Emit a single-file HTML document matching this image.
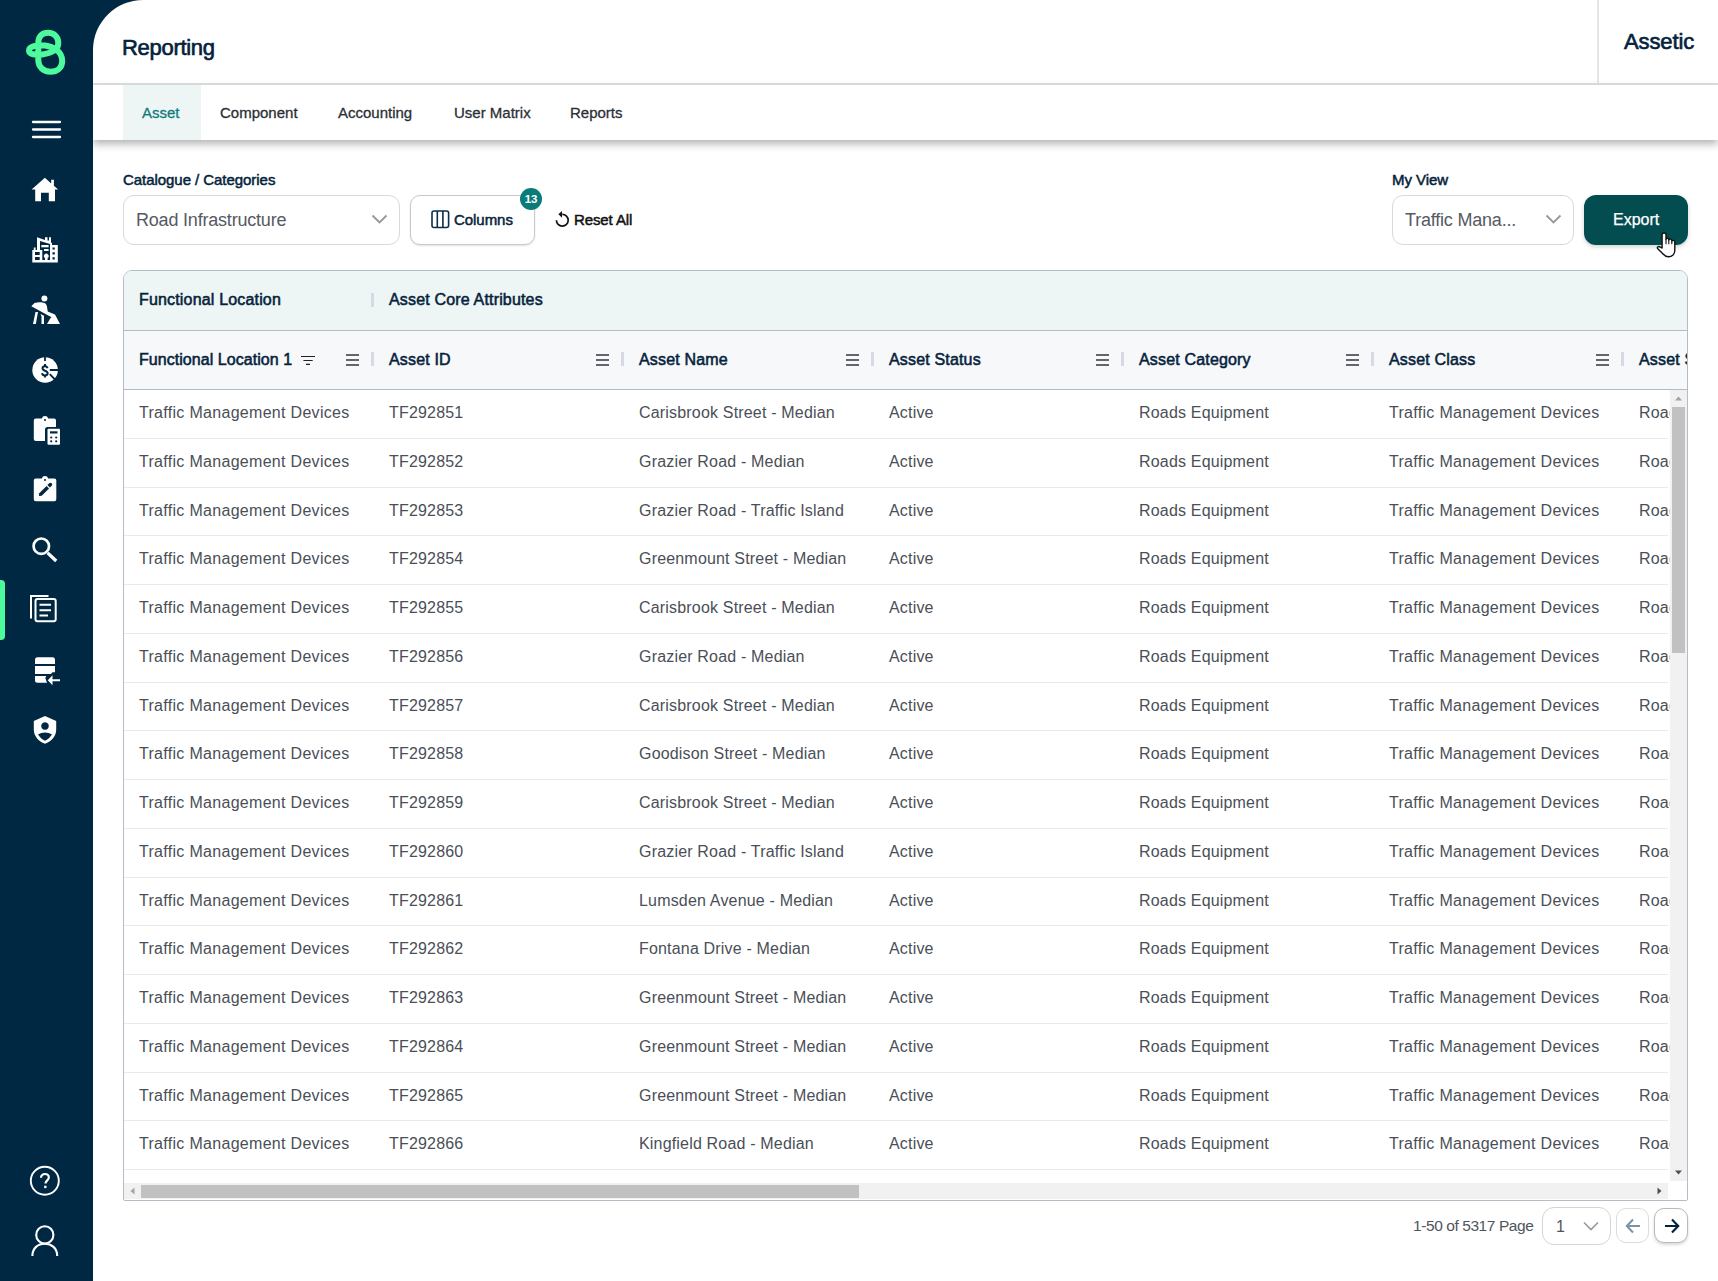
<!DOCTYPE html>
<html><head><meta charset="utf-8"><title>Reporting</title>
<style>
*{box-sizing:border-box;margin:0;padding:0}
html,body{width:1718px;height:1281px;overflow:hidden;background:#002843;font-family:"Liberation Sans",sans-serif;}
.a{position:absolute}
#side{position:absolute;left:0;top:0;width:93px;height:1281px;background:#002843}
#main{position:absolute;left:93px;top:0;width:1625px;height:1281px;background:#fff;border-top-left-radius:50px;overflow:hidden}
#hdr{position:absolute;left:0;top:0;width:1625px;height:85px;border-bottom:2px solid #e1e1e1}
#title{position:absolute;left:29px;top:35px;font-size:22px;font-weight:normal;color:#03223b;letter-spacing:-0.3px;line-height:26px;white-space:nowrap;-webkit-text-stroke:0.65px currentColor}
#brand{position:absolute;left:1504px;top:0;width:121px;height:83px;border-left:2px solid #e6e6e6}
#brand span{position:absolute;left:25px;top:29px;font-size:22px;font-weight:normal;color:#03223b;letter-spacing:-0.1px;line-height:26px;-webkit-text-stroke:0.65px currentColor}
#tabs{position:absolute;left:0;top:85px;width:1625px;height:55px;background:#fff;box-shadow:0 4px 8px rgba(0,0,0,0.30)}
.tab{position:absolute;top:0;height:55px;font-size:15px;color:#2b2f36;line-height:55px;white-space:nowrap;-webkit-text-stroke:0.3px currentColor}
.tab.act{background:#eef6f5;color:#0e7c7b}
.lbl{position:absolute;font-size:15px;font-weight:normal;color:#03223b;letter-spacing:-0.05px;line-height:18px;white-space:nowrap;-webkit-text-stroke:0.5px currentColor}
.sel{position:absolute;border:1px solid #d9d9d9;border-radius:11px;background:#fff;height:50px}
.sel .t{position:absolute;left:12px;top:14px;font-size:18px;color:#555a63;line-height:20px;white-space:nowrap;letter-spacing:-0.2px}
#tbl{position:absolute;left:30px;top:270px;width:1565px;height:931px;border:1px solid #b4bcc8;border-radius:9px 9px 2px 2px;overflow:hidden;background:#fff}
#grp{position:absolute;left:0;top:0;width:1565px;height:60px;background:#eef6f5;border-bottom:1px solid #b4bcc8}
#colh{position:absolute;left:0;top:60px;width:1565px;height:59px;background:#f7f8fa;border-bottom:1px solid #b4bcc8}
.hd{position:absolute;font-size:16px;font-weight:normal;color:#06233d;letter-spacing:0.17px;line-height:20px;white-space:nowrap;-webkit-text-stroke:0.55px currentColor}
.sep{position:absolute;width:3px;height:14px;background:#d6dae6}
.menu{position:absolute;width:13px;height:12px;border-top:2px solid #63676c;border-bottom:2px solid #63676c}
.menu:after{content:"";position:absolute;left:0;top:3px;width:13px;height:2px;background:#63676c}
.rl{position:absolute;left:0;width:1544px;height:1px;background:#e6e9ee}
.c{position:absolute;font-size:16px;color:#4a4f57;letter-spacing:0.3px;line-height:20px;white-space:nowrap}
</style></head><body>
<div id="side">
<svg class="a" style="left:15px;top:20px" width="60" height="60" viewBox="0 0 60 60" fill="none" stroke="#4dfb9c" stroke-width="6">
<path d="M23.3 40 L23.3 23 C23.3 16 27.5 12.8 33.2 12.8 C39 12.8 43.3 17 43.3 23 C43.3 29.5 37 33 27 34.5 C19 35.5 14 34 14 30.5 C14 26.5 22 24.5 30 25.5 C38 26.5 47.2 31 47.2 41 C47.2 48 42 51.8 35.5 51.8 C28.5 51.8 23.3 47 23.3 40 Z"/>
</svg>
<svg class="a" style="left:25px;top:110px" width="40" height="40" viewBox="0 0 40 40" stroke="#fff" stroke-width="2.3" stroke-linecap="round">
<path d="M8 12H35M8 19.5H35M8 27H35"/></svg>
<svg class="a" style="left:25px;top:170px" width="40" height="40" viewBox="0 0 40 40" fill="#fff">
<path d="M19.9 7.8 L6.6 19.6 H10.2 V31.3 H16 V22.7 H23.8 V31.3 H30 V19.6 H33.2 L28.9 15.8 V9.8 H26.2 V13.4 Z"/></svg>
<svg class="a" style="left:25px;top:230px" width="40" height="40" viewBox="0 0 40 40" fill="#fff" fill-rule="evenodd">
<path d="M7.3 20 H8.8 V17.5 H10.6 V20 H12 V7.3 L20 10 V7.3 H22.5 V10.5 H24 V7.3 H26 V12.5 L27 13 V15 H32.8 V32.5 H7.3 Z
M10 22 V25 H14.7 V22 Z M10 27 V30 H14.7 V27 Z
M15 11 V20 H17.3 V30 H20 V28 A2.3 2.3 0 1 1 22.6 28 V30 H25 V14 Z
M27.5 17.5 V19.5 H29.8 V17.5 Z M27.5 22.3 V24.5 H29.8 V22.3 Z M27.5 27.3 V29.5 H29.8 V27.3 Z"/>
<rect x="16.3" y="15" width="7.3" height="2.3"/><rect x="19" y="19" width="4.6" height="2"/></svg>
<svg class="a" style="left:25px;top:290px" width="40" height="40" viewBox="0 0 40 40" fill="#fff">
<circle cx="19.4" cy="8.5" r="3"/>
<path d="M6.3 16.2 L9.5 13 C13 12 17 11.8 20.5 13.5 C21.8 14.8 22.3 17.5 22.7 21.5 L30 24.5 L35 34 H22 L25.2 28.5 L26.5 27.3 Z"/>
<path d="M10.5 22 H13 L10.8 34 H8 Z"/>
<path d="M15.5 24 L19 25.8 V34 H16.5 V26.5 Z"/>
</svg>
<svg class="a" style="left:25px;top:350px" width="40" height="40" viewBox="0 0 40 40">
<circle cx="20.1" cy="20" r="12.8" fill="#fff"/>
<path d="M20 6 V11 M24.8 20 H34 M24.8 24.2 L30 29.5" stroke="#002843" stroke-width="1.8"/>
<path d="M22.5 18.3 C22.2 16.8 21.2 16.2 20 16.2 C18.5 16.2 17.5 17 17.5 18.3 C17.5 19.8 18.8 20.3 20 20.7 C21.5 21.2 22.7 21.8 22.7 23.3 C22.7 24.6 21.6 25.4 20 25.4 C18.4 25.4 17.3 24.6 17 23.2 M20 14 V16.2 M20 25.4 V27.6" fill="none" stroke="#002843" stroke-width="2"/>
</svg>
<svg class="a" style="left:25px;top:410px" width="40" height="40" viewBox="0 0 40 40">
<path d="M10.8 8.5 H16.8 A3.3 3.3 0 0 1 23.2 8.5 H29 A2 2 0 0 1 31 10.5 V17 H22.5 A2.5 2.5 0 0 0 20 19.5 V31 H10.8 A2 2 0 0 1 8.8 29 V10.5 A2 2 0 0 1 10.8 8.5 Z" fill="#fff"/>
<circle cx="20" cy="10" r="1" fill="#002843"/>
<rect x="22.5" y="18.7" width="12.5" height="16.1" rx="1" fill="#fff"/>
<rect x="25" y="21.3" width="7.5" height="2.2" fill="#002843"/>
<circle cx="26.2" cy="27.5" r="1.1" fill="#002843"/><circle cx="31.2" cy="27.5" r="1.1" fill="#002843"/>
<circle cx="26.2" cy="31.3" r="1.1" fill="#002843"/><circle cx="31.2" cy="31.3" r="1.1" fill="#002843"/>
</svg>
<svg class="a" style="left:25px;top:469px" width="40" height="40" viewBox="0 0 40 40">
<path d="M10.8 9.5 H16.8 A3.3 3.3 0 0 1 23.2 9.5 H29.3 A2 2 0 0 1 31.3 11.5 V30.3 A2 2 0 0 1 29.3 32.3 H10.8 A2 2 0 0 1 8.8 30.3 V11.5 A2 2 0 0 1 10.8 9.5 Z" fill="#fff"/>
<circle cx="20" cy="11" r="1" fill="#002843"/>
<path d="M13.9 27.1 L14.26 24.26 L21.56 16.96 L24.04 19.44 L16.74 26.74 Z" fill="#002843"/>
<path d="M22.4 16.1 L24.2 14.3 Q25.5 13.1 26.7 14.3 Q27.9 15.5 26.7 16.8 L24.9 18.6 Z" fill="#002843"/>
</svg>
<svg class="a" style="left:25px;top:529px" width="40" height="40" viewBox="0 0 40 40" fill="none" stroke="#fff">
<circle cx="16.3" cy="17.2" r="7.7" stroke-width="2.7"/>
<path d="M22.6 23.9 L31.2 32" stroke-width="3.3"/>
</svg>
<svg class="a" style="left:25px;top:580px" width="40" height="65" viewBox="0 0 40 65" fill="none" stroke="#fff" stroke-width="2">
<path d="M6 38.5 V16 H23.5"/>
<rect x="10.5" y="19" width="20.2" height="22.3" rx="2"/>
<path d="M14.5 24.8 H26 M14.5 30.2 H26 M14.5 35.5 H23"/>
</svg>
<svg class="a" style="left:25px;top:650px" width="40" height="40" viewBox="0 0 40 40" fill="#fff">
<path d="M10 14 V9.7 A2.5 2.5 0 0 1 12.5 7.2 H27.5 A2.5 2.5 0 0 1 30 9.7 V14 Z"/>
<path d="M10 16 H30 V22.3 H27.5 L26 24 H10 Z"/>
<path d="M10 26 H21.3 L20.3 28 L22 32.7 H12.5 A2.5 2.5 0 0 1 10 30.2 Z"/>
<path d="M22.8 30.2 L27.5 25.2 V29.3 H35 V31.3 H27.5 V35.3 Z"/>
</svg>
<svg class="a" style="left:25px;top:710px" width="40" height="40" viewBox="0 0 40 40" fill="#fff" fill-rule="evenodd">
<path d="M20 6 L31.2 11 V19.5 C31.2 26 26.5 31.5 20 33.8 C13.5 31.5 8.8 26 8.8 19.5 V11 Z
M20 12.2 A3.8 3.8 0 1 0 20.01 12.2 Z
M13 24.5 C17 21.8 23 21.8 27 24.5 C25 27.5 22.5 29.8 20 30.8 C17.5 29.8 15 27.5 13 24.5 Z"/>
</svg>
<svg class="a" style="left:25px;top:1161px" width="40" height="40" viewBox="0 0 40 40">
<circle cx="19.8" cy="19.7" r="14" fill="none" stroke="#fff" stroke-width="1.9"/>
<path d="M16 16.8 C16 14.3 17.8 13 19.9 13 C22.1 13 23.8 14.4 23.8 16.5 C23.8 19.3 20.5 19.5 20.5 22.6" fill="none" stroke="#fff" stroke-width="2.2"/>
<rect x="19.2" y="24.7" width="2.3" height="2.4" fill="#fff"/>
</svg>
<svg class="a" style="left:25px;top:1221px" width="40" height="40" viewBox="0 0 40 40" fill="none" stroke="#fff" stroke-width="2.1">
<circle cx="19.8" cy="13.9" r="8.6"/>
<path d="M7.4 35 C7.4 27 13 22.8 19.8 22.8 C26.6 22.8 32.2 27 32.2 35"/>
</svg>
<div class="a" style="left:0;top:580px;width:5px;height:60px;background:#4dfb9c;border-radius:0 4px 4px 0"></div>
</div>
<div id="main">
  <div id="hdr">
    <div id="title">Reporting</div>
    <div id="brand"><span>Assetic</span></div>
  </div>
  <div id="tabs">
    <div class="tab act" style="left:30px;width:78px;padding-left:19px">Asset</div>
    <div class="tab" style="left:127px">Component</div>
    <div class="tab" style="left:245px">Accounting</div>
    <div class="tab" style="left:361px">User Matrix</div>
    <div class="tab" style="left:477px">Reports</div>
  </div>
  <div class="lbl" style="left:30px;top:171px">Catalogue / Categories</div>
  <div class="sel" style="left:30px;top:195px;width:277px"><div class="t">Road Infrastructure</div>
    <svg class="a" style="left:247px;top:18px" width="17" height="10" viewBox="0 0 16 10" fill="none" stroke="#999" stroke-width="1.9"><path d="M1 1.5L8 8.5L15 1.5"/></svg></div>
  <div class="lbl" style="left:1299px;top:171px">My View</div>
  <div class="sel" style="left:1299px;top:195px;width:182px"><div class="t">Traffic Mana...</div>
    <svg class="a" style="left:152px;top:18px" width="17" height="10" viewBox="0 0 16 10" fill="none" stroke="#999" stroke-width="1.9"><path d="M1 1.5L8 8.5L15 1.5"/></svg></div>

  <div class="a" style="left:317px;top:195px;width:125px;height:50px;border:1px solid #c9c9c9;border-radius:10px;background:#fff;box-shadow:0 1px 2px rgba(0,0,0,0.12)">
    <svg class="a" style="left:20px;top:14px" width="19" height="19" viewBox="0 0 19 19" fill="none" stroke="#0b2e4a" stroke-width="1.6"><rect x="1" y="1" width="16.6" height="16.5" rx="2"/><path d="M6.3 1V17.5M11.9 1V17.5"/></svg>
    <div class="a" style="left:43px;top:15px;font-size:15px;font-weight:normal;color:#06233d;letter-spacing:-0.05px;line-height:18px;-webkit-text-stroke:0.5px currentColor">Columns</div>
  </div>
  <div class="a" style="left:427px;top:188px;width:22px;height:22px;border-radius:11px;background:#0b7b7a;color:#fff;font-size:11.5px;font-weight:bold;line-height:22px;text-align:center;letter-spacing:-0.2px">13</div>
  <svg class="a" style="left:461px;top:210px" width="17" height="18" viewBox="0 0 17 18"><path d="M2.4 10.2 A5.9 5.9 0 1 0 8.3 4.3" fill="none" stroke="#111" stroke-width="1.7"/><path d="M4.4 4.3 L8 0.9 V7.8 Z" fill="#111"/></svg>
  <div class="a" style="left:481px;top:211px;font-size:15px;font-weight:normal;color:#111;letter-spacing:-0.1px;line-height:18px;white-space:nowrap;-webkit-text-stroke:0.5px currentColor">Reset All</div>
  <div class="a" style="left:1491px;top:195px;width:104px;height:50px;border-radius:12px;background:#034c4f;box-shadow:0 2px 4px rgba(0,0,0,0.18)">
    <div class="a" style="left:29px;top:15px;font-size:16px;color:#fff;line-height:20px;letter-spacing:0px;-webkit-text-stroke:0.25px #fff">Export</div>
  </div>
  <svg class="a" style="left:1562px;top:231px" width="22" height="28" viewBox="0 0 22 28"><path d="M7.1 17 V3.6 C7.1 2.6 7.8 2 9 2 C10.2 2 11 2.6 11 3.6 V8.6 C11 7.8 11.6 7.3 12.4 7.3 C13.2 7.3 13.8 7.8 13.8 8.6 V9.3 C13.8 8.6 14.5 8.1 15.3 8.1 C16.1 8.1 16.8 8.6 16.8 9.3 V10.6 C16.8 9.9 17.5 9.4 18.3 9.4 C19.1 9.4 19.8 9.9 19.8 10.6 V19.6 C19.8 23 17.2 25.7 13.5 25.7 C10.8 25.7 9.3 24.6 7.8 22.8 L2.8 17.8 C2.1 17.1 2.2 16.2 2.9 15.8 C3.8 15.3 4.6 15.5 5.3 16.2 Z" fill="#fff" stroke="#111" stroke-width="1.4" stroke-linejoin="round"/><path d="M11 8.6V13.2M13.8 9.3V13.2M16.8 10.6V13.2" stroke="#111" stroke-width="1.1"/></svg>
  <div id="tbl">
<div id="grp">
<div class="hd" style="left:15px;top:19px">Functional Location</div>
<div class="sep" style="left:247px;top:22px"></div>
<div class="hd" style="left:265px;top:19px">Asset Core Attributes</div>
</div>
<div id="colh">
<div class="hd" style="left:15px;top:19px;letter-spacing:0.05px">Functional Location 1</div>
<div class="menu" style="left:222px;top:23px"></div>
<div class="sep" style="left:247px;top:21px"></div>
<div class="hd" style="left:265px;top:19px">Asset ID</div>
<div class="menu" style="left:472px;top:23px"></div>
<div class="sep" style="left:497px;top:21px"></div>
<div class="hd" style="left:515px;top:19px">Asset Name</div>
<div class="menu" style="left:722px;top:23px"></div>
<div class="sep" style="left:747px;top:21px"></div>
<div class="hd" style="left:765px;top:19px">Asset Status</div>
<div class="menu" style="left:972px;top:23px"></div>
<div class="sep" style="left:997px;top:21px"></div>
<div class="hd" style="left:1015px;top:19px">Asset Category</div>
<div class="menu" style="left:1222px;top:23px"></div>
<div class="sep" style="left:1247px;top:21px"></div>
<div class="hd" style="left:1265px;top:19px">Asset Class</div>
<div class="menu" style="left:1472px;top:23px"></div>
<div class="sep" style="left:1497px;top:21px"></div>
<div class="hd" style="left:1515px;top:19px">Asset Sub Class</div>
<svg class="a" style="left:176px;top:23px" width="16" height="12" viewBox="0 0 16 12" stroke="#222" stroke-width="1.2"><path d="M1 2.5H15M3.4 6.5H12.7M6 10.4H10"/></svg>
</div>
<div id="rows" class="a" style="left:0;top:119px;width:1546px;height:791px;overflow:hidden">
<div class="c" style="left:15px;top:13px">Traffic Management Devices</div>
<div class="c" style="left:265px;top:13px;letter-spacing:0.18px">TF292851</div>
<div class="c" style="left:515px;top:13px;letter-spacing:0.18px">Carisbrook Street - Median</div>
<div class="c" style="left:765px;top:13px;letter-spacing:0.18px">Active</div>
<div class="c" style="left:1015px;top:13px;letter-spacing:0.18px">Roads Equipment</div>
<div class="c" style="left:1265px;top:13px">Traffic Management Devices</div>
<div class="c" style="left:1515px;top:13px;letter-spacing:0.18px">Roads Equipment</div>
<div class="rl" style="top:48px"></div>
<div class="c" style="left:15px;top:62px">Traffic Management Devices</div>
<div class="c" style="left:265px;top:62px;letter-spacing:0.18px">TF292852</div>
<div class="c" style="left:515px;top:62px;letter-spacing:0.18px">Grazier Road - Median</div>
<div class="c" style="left:765px;top:62px;letter-spacing:0.18px">Active</div>
<div class="c" style="left:1015px;top:62px;letter-spacing:0.18px">Roads Equipment</div>
<div class="c" style="left:1265px;top:62px">Traffic Management Devices</div>
<div class="c" style="left:1515px;top:62px;letter-spacing:0.18px">Roads Equipment</div>
<div class="rl" style="top:97px"></div>
<div class="c" style="left:15px;top:111px">Traffic Management Devices</div>
<div class="c" style="left:265px;top:111px;letter-spacing:0.18px">TF292853</div>
<div class="c" style="left:515px;top:111px;letter-spacing:0.18px">Grazier Road - Traffic Island</div>
<div class="c" style="left:765px;top:111px;letter-spacing:0.18px">Active</div>
<div class="c" style="left:1015px;top:111px;letter-spacing:0.18px">Roads Equipment</div>
<div class="c" style="left:1265px;top:111px">Traffic Management Devices</div>
<div class="c" style="left:1515px;top:111px;letter-spacing:0.18px">Roads Equipment</div>
<div class="rl" style="top:145px"></div>
<div class="c" style="left:15px;top:159px">Traffic Management Devices</div>
<div class="c" style="left:265px;top:159px;letter-spacing:0.18px">TF292854</div>
<div class="c" style="left:515px;top:159px;letter-spacing:0.18px">Greenmount Street - Median</div>
<div class="c" style="left:765px;top:159px;letter-spacing:0.18px">Active</div>
<div class="c" style="left:1015px;top:159px;letter-spacing:0.18px">Roads Equipment</div>
<div class="c" style="left:1265px;top:159px">Traffic Management Devices</div>
<div class="c" style="left:1515px;top:159px;letter-spacing:0.18px">Roads Equipment</div>
<div class="rl" style="top:194px"></div>
<div class="c" style="left:15px;top:208px">Traffic Management Devices</div>
<div class="c" style="left:265px;top:208px;letter-spacing:0.18px">TF292855</div>
<div class="c" style="left:515px;top:208px;letter-spacing:0.18px">Carisbrook Street - Median</div>
<div class="c" style="left:765px;top:208px;letter-spacing:0.18px">Active</div>
<div class="c" style="left:1015px;top:208px;letter-spacing:0.18px">Roads Equipment</div>
<div class="c" style="left:1265px;top:208px">Traffic Management Devices</div>
<div class="c" style="left:1515px;top:208px;letter-spacing:0.18px">Roads Equipment</div>
<div class="rl" style="top:243px"></div>
<div class="c" style="left:15px;top:257px">Traffic Management Devices</div>
<div class="c" style="left:265px;top:257px;letter-spacing:0.18px">TF292856</div>
<div class="c" style="left:515px;top:257px;letter-spacing:0.18px">Grazier Road - Median</div>
<div class="c" style="left:765px;top:257px;letter-spacing:0.18px">Active</div>
<div class="c" style="left:1015px;top:257px;letter-spacing:0.18px">Roads Equipment</div>
<div class="c" style="left:1265px;top:257px">Traffic Management Devices</div>
<div class="c" style="left:1515px;top:257px;letter-spacing:0.18px">Roads Equipment</div>
<div class="rl" style="top:292px"></div>
<div class="c" style="left:15px;top:306px">Traffic Management Devices</div>
<div class="c" style="left:265px;top:306px;letter-spacing:0.18px">TF292857</div>
<div class="c" style="left:515px;top:306px;letter-spacing:0.18px">Carisbrook Street - Median</div>
<div class="c" style="left:765px;top:306px;letter-spacing:0.18px">Active</div>
<div class="c" style="left:1015px;top:306px;letter-spacing:0.18px">Roads Equipment</div>
<div class="c" style="left:1265px;top:306px">Traffic Management Devices</div>
<div class="c" style="left:1515px;top:306px;letter-spacing:0.18px">Roads Equipment</div>
<div class="rl" style="top:340px"></div>
<div class="c" style="left:15px;top:354px">Traffic Management Devices</div>
<div class="c" style="left:265px;top:354px;letter-spacing:0.18px">TF292858</div>
<div class="c" style="left:515px;top:354px;letter-spacing:0.18px">Goodison Street - Median</div>
<div class="c" style="left:765px;top:354px;letter-spacing:0.18px">Active</div>
<div class="c" style="left:1015px;top:354px;letter-spacing:0.18px">Roads Equipment</div>
<div class="c" style="left:1265px;top:354px">Traffic Management Devices</div>
<div class="c" style="left:1515px;top:354px;letter-spacing:0.18px">Roads Equipment</div>
<div class="rl" style="top:389px"></div>
<div class="c" style="left:15px;top:403px">Traffic Management Devices</div>
<div class="c" style="left:265px;top:403px;letter-spacing:0.18px">TF292859</div>
<div class="c" style="left:515px;top:403px;letter-spacing:0.18px">Carisbrook Street - Median</div>
<div class="c" style="left:765px;top:403px;letter-spacing:0.18px">Active</div>
<div class="c" style="left:1015px;top:403px;letter-spacing:0.18px">Roads Equipment</div>
<div class="c" style="left:1265px;top:403px">Traffic Management Devices</div>
<div class="c" style="left:1515px;top:403px;letter-spacing:0.18px">Roads Equipment</div>
<div class="rl" style="top:438px"></div>
<div class="c" style="left:15px;top:452px">Traffic Management Devices</div>
<div class="c" style="left:265px;top:452px;letter-spacing:0.18px">TF292860</div>
<div class="c" style="left:515px;top:452px;letter-spacing:0.18px">Grazier Road - Traffic Island</div>
<div class="c" style="left:765px;top:452px;letter-spacing:0.18px">Active</div>
<div class="c" style="left:1015px;top:452px;letter-spacing:0.18px">Roads Equipment</div>
<div class="c" style="left:1265px;top:452px">Traffic Management Devices</div>
<div class="c" style="left:1515px;top:452px;letter-spacing:0.18px">Roads Equipment</div>
<div class="rl" style="top:487px"></div>
<div class="c" style="left:15px;top:501px">Traffic Management Devices</div>
<div class="c" style="left:265px;top:501px;letter-spacing:0.18px">TF292861</div>
<div class="c" style="left:515px;top:501px;letter-spacing:0.18px">Lumsden Avenue - Median</div>
<div class="c" style="left:765px;top:501px;letter-spacing:0.18px">Active</div>
<div class="c" style="left:1015px;top:501px;letter-spacing:0.18px">Roads Equipment</div>
<div class="c" style="left:1265px;top:501px">Traffic Management Devices</div>
<div class="c" style="left:1515px;top:501px;letter-spacing:0.18px">Roads Equipment</div>
<div class="rl" style="top:535px"></div>
<div class="c" style="left:15px;top:549px">Traffic Management Devices</div>
<div class="c" style="left:265px;top:549px;letter-spacing:0.18px">TF292862</div>
<div class="c" style="left:515px;top:549px;letter-spacing:0.18px">Fontana Drive - Median</div>
<div class="c" style="left:765px;top:549px;letter-spacing:0.18px">Active</div>
<div class="c" style="left:1015px;top:549px;letter-spacing:0.18px">Roads Equipment</div>
<div class="c" style="left:1265px;top:549px">Traffic Management Devices</div>
<div class="c" style="left:1515px;top:549px;letter-spacing:0.18px">Roads Equipment</div>
<div class="rl" style="top:584px"></div>
<div class="c" style="left:15px;top:598px">Traffic Management Devices</div>
<div class="c" style="left:265px;top:598px;letter-spacing:0.18px">TF292863</div>
<div class="c" style="left:515px;top:598px;letter-spacing:0.18px">Greenmount Street - Median</div>
<div class="c" style="left:765px;top:598px;letter-spacing:0.18px">Active</div>
<div class="c" style="left:1015px;top:598px;letter-spacing:0.18px">Roads Equipment</div>
<div class="c" style="left:1265px;top:598px">Traffic Management Devices</div>
<div class="c" style="left:1515px;top:598px;letter-spacing:0.18px">Roads Equipment</div>
<div class="rl" style="top:633px"></div>
<div class="c" style="left:15px;top:647px">Traffic Management Devices</div>
<div class="c" style="left:265px;top:647px;letter-spacing:0.18px">TF292864</div>
<div class="c" style="left:515px;top:647px;letter-spacing:0.18px">Greenmount Street - Median</div>
<div class="c" style="left:765px;top:647px;letter-spacing:0.18px">Active</div>
<div class="c" style="left:1015px;top:647px;letter-spacing:0.18px">Roads Equipment</div>
<div class="c" style="left:1265px;top:647px">Traffic Management Devices</div>
<div class="c" style="left:1515px;top:647px;letter-spacing:0.18px">Roads Equipment</div>
<div class="rl" style="top:682px"></div>
<div class="c" style="left:15px;top:696px">Traffic Management Devices</div>
<div class="c" style="left:265px;top:696px;letter-spacing:0.18px">TF292865</div>
<div class="c" style="left:515px;top:696px;letter-spacing:0.18px">Greenmount Street - Median</div>
<div class="c" style="left:765px;top:696px;letter-spacing:0.18px">Active</div>
<div class="c" style="left:1015px;top:696px;letter-spacing:0.18px">Roads Equipment</div>
<div class="c" style="left:1265px;top:696px">Traffic Management Devices</div>
<div class="c" style="left:1515px;top:696px;letter-spacing:0.18px">Roads Equipment</div>
<div class="rl" style="top:730px"></div>
<div class="c" style="left:15px;top:744px">Traffic Management Devices</div>
<div class="c" style="left:265px;top:744px;letter-spacing:0.18px">TF292866</div>
<div class="c" style="left:515px;top:744px;letter-spacing:0.18px">Kingfield Road - Median</div>
<div class="c" style="left:765px;top:744px;letter-spacing:0.18px">Active</div>
<div class="c" style="left:1015px;top:744px;letter-spacing:0.18px">Roads Equipment</div>
<div class="c" style="left:1265px;top:744px">Traffic Management Devices</div>
<div class="c" style="left:1515px;top:744px;letter-spacing:0.18px">Roads Equipment</div>
<div class="rl" style="top:779px"></div>
</div>
<div class="a" style="left:1546px;top:119px;width:17px;height:791px;background:#f1f1f1"></div>
<div class="a" style="left:1548px;top:136px;width:13px;height:246px;background:#c1c1c1"></div>
<svg class="a" style="left:1546px;top:119px" width="17" height="17" viewBox="0 0 17 17"><path d="M5 10.5H12L8.5 6.5Z" fill="#a3a3a3"/></svg>
<svg class="a" style="left:1546px;top:893px" width="17" height="17" viewBox="0 0 17 17"><path d="M5 6.5H12L8.5 10.5Z" fill="#505050"/></svg>
<div class="a" style="left:0;top:912px;width:1544px;height:16px;background:#f1f1f1"></div>
<div class="a" style="left:17px;top:914px;width:718px;height:13px;background:#c1c1c1"></div>
<svg class="a" style="left:0;top:912px" width="17" height="16" viewBox="0 0 17 16"><path d="M10.5 4.5V11.5L6.5 8Z" fill="#a3a3a3"/></svg>
<svg class="a" style="left:1527px;top:912px" width="17" height="16" viewBox="0 0 17 16"><path d="M6.5 4.5V11.5L10.5 8Z" fill="#505050"/></svg>
  </div>

  <div class="a" style="left:1320px;top:1216px;font-size:15.5px;color:#50555c;line-height:20px;white-space:nowrap;letter-spacing:-0.42px">1-50 of 5317 Page</div>
  <div class="a" style="left:1449px;top:1207px;width:69px;height:38px;border:1px solid #d5d5d5;border-radius:12px;background:#fff">
    <div class="a" style="left:13px;top:9px;font-size:16px;color:#50555c;line-height:20px">1</div>
    <svg class="a" style="left:40px;top:13px" width="16" height="10" viewBox="0 0 16 10" fill="none" stroke="#999" stroke-width="1.6"><path d="M1 1.5L8 8.5L15 1.5"/></svg>
  </div>
  <div class="a" style="left:1523px;top:1208px;width:33px;height:35px;border:1px solid #dcdcdc;border-radius:10px;background:#fff">
    <svg class="a" style="left:8px;top:9px" width="16" height="16" viewBox="0 0 16 16" fill="none" stroke="#7b93a5" stroke-width="2"><path d="M15 8H2M8 1.5L1.8 8L8 14.5"/></svg>
  </div>
  <div class="a" style="left:1561px;top:1208px;width:34px;height:35px;border:1px solid #b9b9b9;border-radius:10px;background:#fff;box-shadow:0 2px 3px rgba(0,0,0,0.15)">
    <svg class="a" style="left:9px;top:9px" width="16" height="16" viewBox="0 0 16 16" fill="none" stroke="#06233d" stroke-width="2.2"><path d="M1 8H14M8 1.5L14.2 8L8 14.5"/></svg>
  </div>
</div>
</body></html>
